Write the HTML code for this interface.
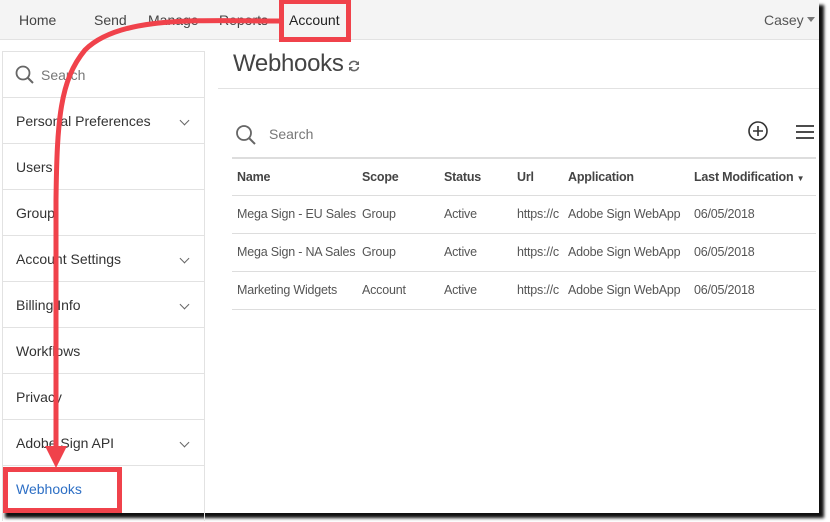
<!DOCTYPE html>
<html><head><style>
*{margin:0;padding:0;box-sizing:border-box}
body{width:830px;height:522px;background:#fff;font-family:"Liberation Sans",sans-serif;position:relative;overflow:hidden;color:#333}
#page{position:absolute;left:0;top:0;width:819px;height:513px;background:#fff;box-shadow:5px 5px 3px #111}
#top{position:absolute;left:0;top:0;width:819px;height:40px;background:#f4f4f4;border-bottom:1px solid #e2e2e2}
.nav{position:absolute;top:12px;font-size:14px;color:#444}
#side{position:absolute;left:2px;top:51px;width:203px;height:470px;border:1px solid #e2e2e2;border-bottom:none}
.row{height:46px;border-bottom:1px solid #e2e2e2;font-size:14px;line-height:46px;padding-left:13px;color:#333;position:relative}
.chev{position:absolute;right:16px;top:19px;width:7px;height:7px;border-right:1.5px solid #666;border-bottom:1.5px solid #666;transform:rotate(45deg)}
table{border-collapse:collapse;position:absolute;left:232px;top:157px;width:584px;font-size:12.5px;table-layout:fixed;letter-spacing:-0.2px}
th{text-align:left;font-weight:bold;color:#444;height:37px;border-top:2px solid #ddd;border-bottom:1px solid #ddd;padding-left:5px;white-space:nowrap}
td{height:38px;border-bottom:1px solid #ddd;color:#555;padding-left:5px;white-space:nowrap;overflow:hidden}
</style></head><body>
<div id="page">
<div id="top">
<span class="nav" style="left:19px">Home</span>
<span class="nav" style="left:94px">Send</span>
<span class="nav" style="left:148px">Manage</span>
<span class="nav" style="left:219px">Reports</span>
<span class="nav" style="left:289px;color:#222">Account</span>
<span class="nav" style="left:764px;color:#555">Casey</span>
<span style="position:absolute;left:807px;top:17px;border-left:4px solid transparent;border-right:4px solid transparent;border-top:5px solid #777"></span>
</div>
<div id="side">
<div class="row" style="padding-left:38px;color:#777">Search
<svg style="position:absolute;left:12px;top:13px" width="20" height="20" viewBox="0 0 20 20"><circle cx="8" cy="8" r="6.5" fill="none" stroke="#666" stroke-width="1.8"/><line x1="12.5" y1="12.5" x2="18" y2="18" stroke="#666" stroke-width="2"/></svg></div>
<div class="row">Personal Preferences<span class="chev"></span></div>
<div class="row">Users</div>
<div class="row">Group</div>
<div class="row">Account Settings<span class="chev"></span></div>
<div class="row">Billing Info<span class="chev"></span></div>
<div class="row">Workflows</div>
<div class="row">Privacy</div>
<div class="row">Adobe Sign API<span class="chev"></span></div>
<div class="row" style="color:#2d6fc5;border:none">Webhooks</div>
</div>
<div style="position:absolute;left:233px;top:50px;font-size:24px;color:#444;letter-spacing:-0.3px">Webhooks</div>
<svg style="position:absolute;left:347px;top:59px" width="14" height="14" viewBox="0 0 14 14"><path d="M2.5 6A4.5 4.5 0 0 1 11 5M11.5 8A4.5 4.5 0 0 1 3 9" fill="none" stroke="#666" stroke-width="1.6"/><path d="M12 2v4H8z M2 12V8h4z" fill="#666"/></svg>
<div style="position:absolute;left:218px;top:88px;width:601px;height:1px;background:#e2e2e2"></div>
<svg style="position:absolute;left:235px;top:124px" width="22" height="22" viewBox="0 0 22 22"><circle cx="9" cy="9" r="7" fill="none" stroke="#666" stroke-width="1.8"/><line x1="14" y1="14" x2="20" y2="20" stroke="#666" stroke-width="2"/></svg>
<div style="position:absolute;left:269px;top:126px;font-size:14px;color:#777">Search</div>
<svg style="position:absolute;left:747px;top:120px" width="22" height="22" viewBox="0 0 22 22"><circle cx="11" cy="11" r="9" fill="none" stroke="#333" stroke-width="1.6"/><path d="M11 6v10M6 11h10" stroke="#333" stroke-width="1.6"/></svg>
<svg style="position:absolute;left:795px;top:124px" width="20" height="16" viewBox="0 0 20 16"><path d="M1 2h18M1 8h18M1 14h18" stroke="#333" stroke-width="1.8"/></svg>
<table>
<colgroup><col style="width:125px"><col style="width:82px"><col style="width:73px"><col style="width:51px"><col style="width:126px"><col style="width:127px"></colgroup>
<tr><th>Name</th><th>Scope</th><th>Status</th><th>Url</th><th>Application</th><th>Last Modification <span style="font-size:8px">▼</span></th></tr>
<tr><td>Mega Sign - EU Sales</td><td>Group</td><td>Active</td><td>https://c</td><td>Adobe Sign WebApp</td><td>06/05/2018</td></tr>
<tr><td>Mega Sign - NA Sales</td><td>Group</td><td>Active</td><td>https://c</td><td>Adobe Sign WebApp</td><td>06/05/2018</td></tr>
<tr><td>Marketing Widgets</td><td>Account</td><td>Active</td><td>https://c</td><td>Adobe Sign WebApp</td><td>06/05/2018</td></tr>
</table>
</div>
<svg style="position:absolute;left:0;top:0" width="830" height="522">
<rect x="281.5" y="1.5" width="67" height="38" fill="none" stroke="#f0424b" stroke-width="5"/>
<rect x="5.5" y="469.5" width="114" height="41" fill="none" stroke="#f0424b" stroke-width="5"/>
<path d="M280 21 C200 21 120 15 85 50 C60 80 57 120 56 200 L56 448" fill="none" stroke="#f0424b" stroke-width="5"/>
<path d="M45 446 L67 446 L56 468 Z" fill="#f0424b"/>
</svg>
</body></html>
